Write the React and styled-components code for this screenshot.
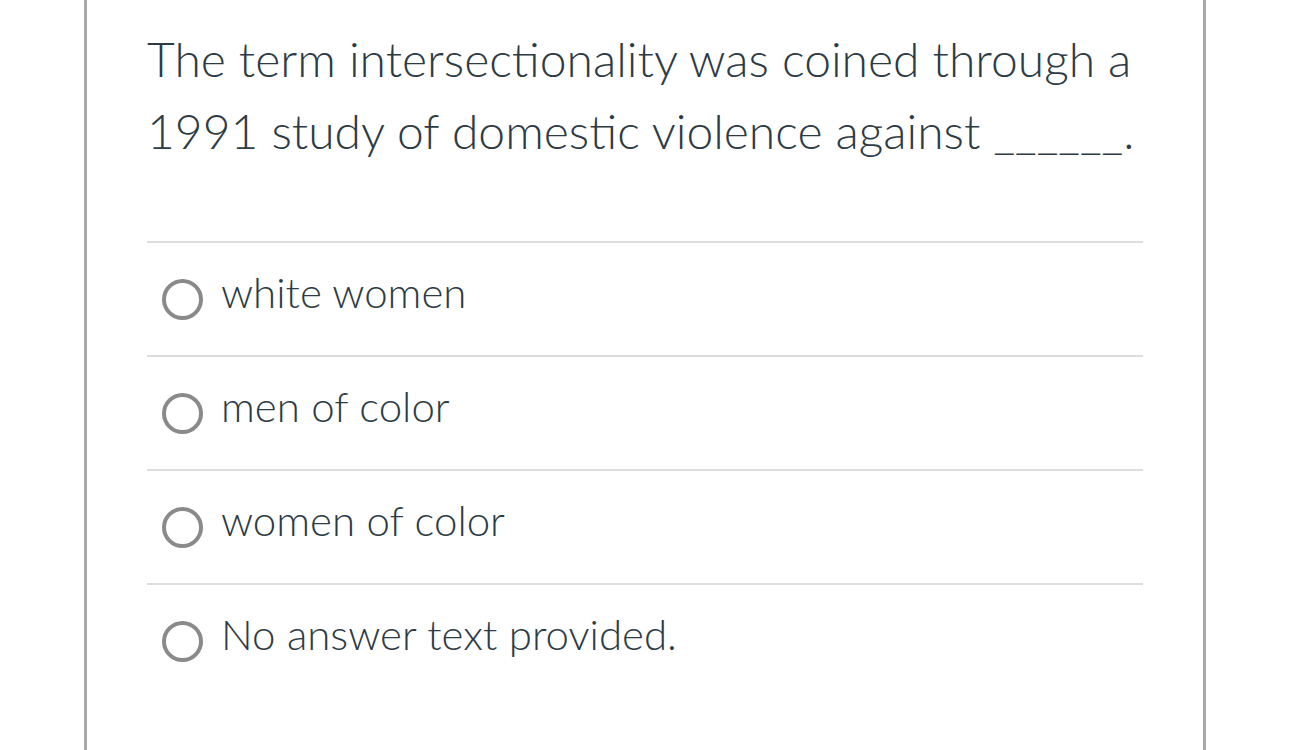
import React from "react";
import styled, { createGlobalStyle } from "styled-components";

const GlobalStyle = createGlobalStyle`
  html, body {
    margin: 0;
    padding: 0;
    background: #ffffff;
    overflow: hidden;
  }
  body {
    font-family: "Lato Light", Lato, "Open Sans", "Liberation Sans", sans-serif;
    color: #2d3b45;
  }
`;

const Page = styled.div`
  display: flex;
  justify-content: center;
  min-height: 100vh;
`;

const Card = styled.div`
  width: 1122px;
  box-sizing: border-box;
  min-height: 100vh;
  border-left: 3px solid #a9a9a9;
  border-right: 3px solid #a9a9a9;
  padding: 23px 60px 0;
`;

const Question = styled.div`
  font-size: 48px;
  font-weight: 300;
  line-height: 72px;
  margin-bottom: 74px;
`;

const Answers = styled.div`
  display: flex;
  flex-direction: column;
`;

const Answer = styled.label`
  display: flex;
  align-items: center;
  gap: 18px;
  height: 112px;
  padding-left: 15px;
  border-top: 2px solid #dddddd;
  cursor: pointer;
`;

const Radio = styled.span`
  width: 41px;
  height: 41px;
  box-sizing: border-box;
  border: 4px solid #8a8a8a;
  border-radius: 50%;
  flex-shrink: 0;
`;

const AnswerText = styled.span`
  font-size: 42px;
  font-weight: 300;
  line-height: 1.2;
  padding-bottom: 13px;
`;

const answers = [
  "white women",
  "men of color",
  "women of color",
  "No answer text provided.",
];

const App = () => (
  <>
    <GlobalStyle />
    <Page>
      <Card>
        <Question>
          The term intersectionality was coined through a 1991 study of
          domestic violence against ______.
        </Question>
        <Answers>
          {answers.map(text => (
            <Answer key={text}>
              <Radio />
              <AnswerText>{text}</AnswerText>
            </Answer>
          ))}
        </Answers>
      </Card>
    </Page>
  </>
);

export default App;
